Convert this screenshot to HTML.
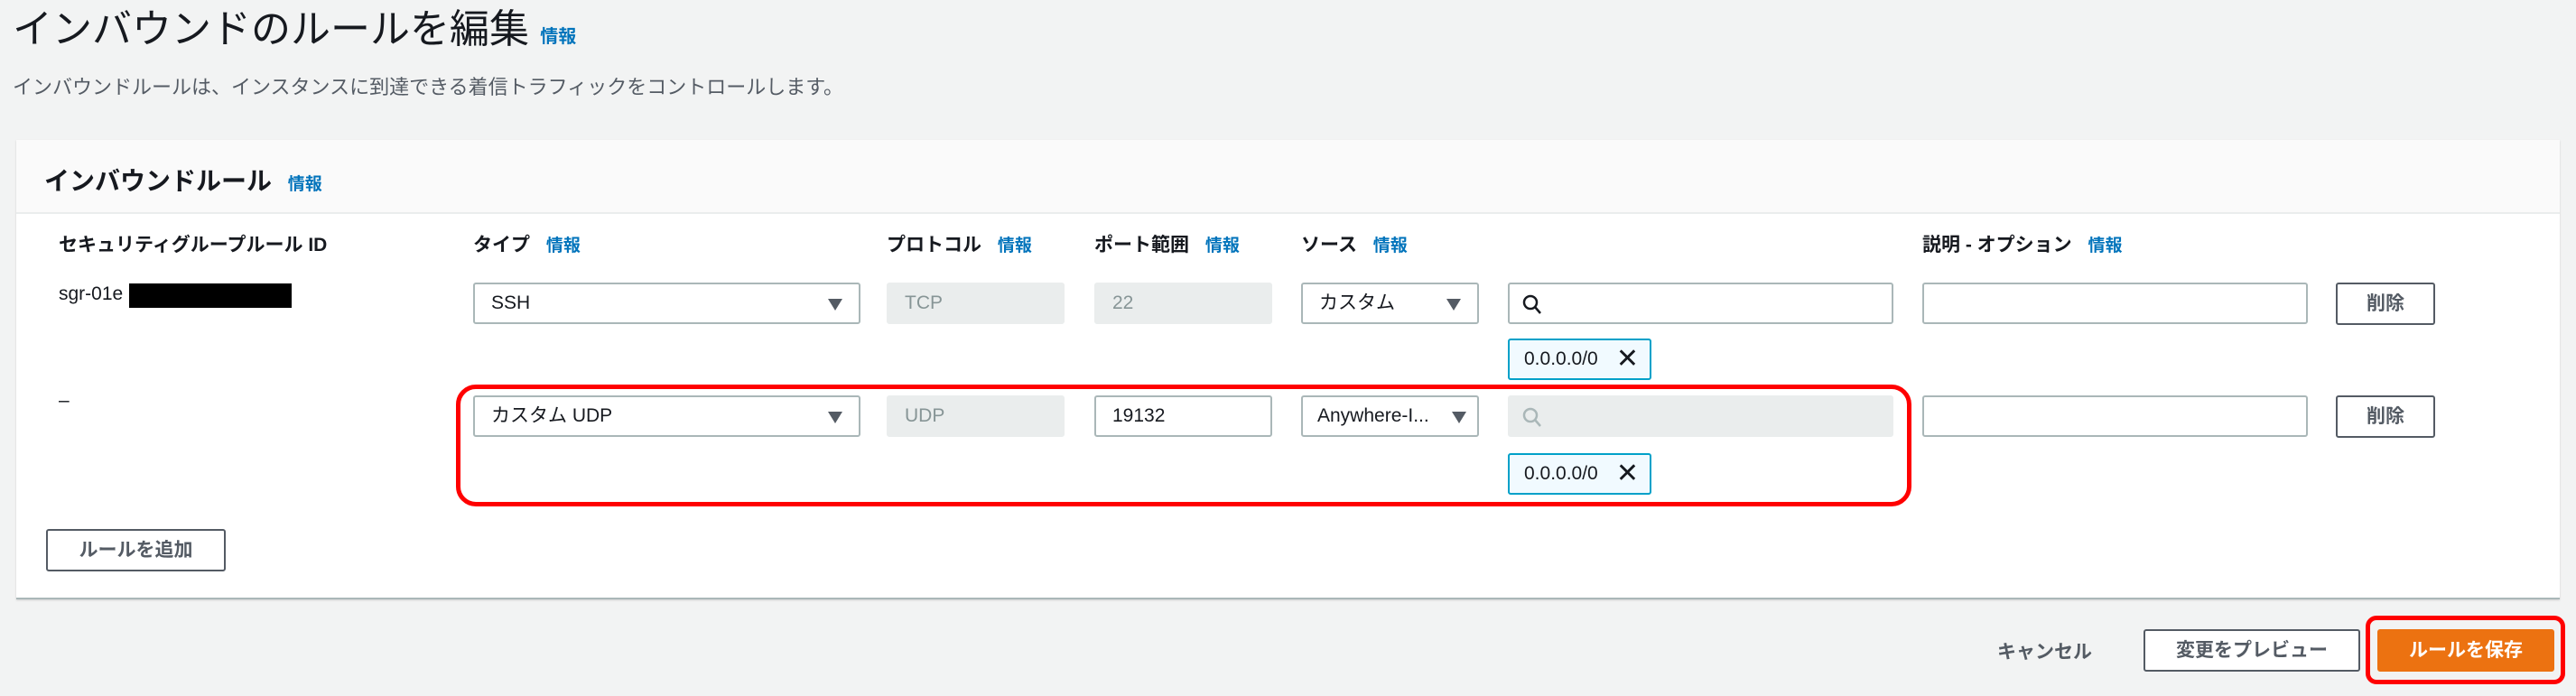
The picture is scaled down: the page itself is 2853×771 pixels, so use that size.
<!DOCTYPE html>
<html><head><meta charset="utf-8"><style>
*{margin:0;padding:0;box-sizing:border-box}
body{width:2853px;height:771px;background:#f2f3f3;position:relative;overflow:hidden;font-family:"Liberation Sans","Noto Sans CJK JP",sans-serif;color:#16191f}
.a{position:absolute;white-space:nowrap}
.l{color:#0073bb;font-weight:bold}
.box{position:absolute;height:46px;border:2px solid #aab7b8;border-radius:3px;background:#fff;font-size:21px;line-height:42px;padding-left:18px}
.dis{background:#eaeded;border-color:#eaeded;color:#879596}
.arr{position:absolute;right:18px;top:16px;width:0;height:0;border-left:8px solid transparent;border-right:8px solid transparent;border-top:13px solid #545b64}
.tok{position:absolute;height:46px;width:159px;border:2px solid #00a1c9;background:#f1faff;border-radius:3px;font-size:21px;line-height:42px;padding-left:16px}
.btn{position:absolute;height:47px;border:2px solid #545b64;border-radius:3px;background:#fff;font-size:21px;font-weight:bold;text-align:center;line-height:43px;color:#545b64}
.h{font-size:21px;font-weight:600}
</style></head><body>
<div class="a" style="left:14px;top:6px;font-size:44px;line-height:54px">インバウンドのルールを編集 <span class="l" style="font-size:20px">情報</span></div>
<div class="a" style="left:14px;top:79px;font-size:22px;color:#545b64">インバウンドルールは、インスタンスに到達できる着信トラフィックをコントロールします。</div>
<div style="position:absolute;left:18px;top:155px;width:2817px;height:509px;background:#fff;border-bottom:2px solid #aab7b8;box-shadow:0 1px 2px rgba(0,0,0,.15)">
<div style="height:82px;background:#fafafa;border-bottom:2px solid #eaeded"></div></div>
<div class="a" style="left:49px;top:179px;font-size:28px;font-weight:bold">インバウンドルール <span class="l" style="font-size:19px;margin-left:10px">情報</span></div>
<div class="a h" style="left:65px;top:255px">セキュリティグループルール ID</div>
<div class="a h" style="left:524px;top:255px">タイプ <span class="l" style="font-size:19px;margin-left:12px">情報</span></div>
<div class="a h" style="left:982px;top:255px">プロトコル <span class="l" style="font-size:19px;margin-left:12px">情報</span></div>
<div class="a h" style="left:1212px;top:255px">ポート範囲 <span class="l" style="font-size:19px;margin-left:12px">情報</span></div>
<div class="a h" style="left:1441px;top:255px">ソース <span class="l" style="font-size:19px;margin-left:12px">情報</span></div>
<div class="a h" style="left:2129px;top:255px">説明 - オプション <span class="l" style="font-size:19px;margin-left:12px">情報</span></div>

<div class="a" style="left:65px;top:314px;font-size:21px">sgr-01e</div>
<div class="a" style="left:143px;top:314px;width:180px;height:27px;background:#000"></div>
<div class="box" style="left:524px;top:313px;width:429px">SSH<div class="arr"></div></div>
<div class="box dis" style="left:982px;top:313px;width:197px">TCP</div>
<div class="box dis" style="left:1212px;top:313px;width:197px">22</div>
<div class="box" style="left:1441px;top:313px;width:197px">カスタム<div class="arr"></div></div>
<div class="box" style="left:1670px;top:313px;width:427px"><svg style="position:absolute;left:14px;top:11px" width="22" height="24" viewBox="0 0 22 24"><circle cx="9" cy="9" r="7" fill="none" stroke="#16191f" stroke-width="2.5"/><path d="M14 14l6 7" stroke="#16191f" stroke-width="2.5"/></svg></div>
<div class="box" style="left:2129px;top:313px;width:427px"></div>
<div class="btn" style="left:2587px;top:313px;width:110px">削除</div>
<div class="tok" style="left:1670px;top:375px">0.0.0.0/0<span style="position:absolute;right:12px;top:0;font-size:30px;color:#16191f">✕</span></div>

<div class="a" style="left:65px;top:432px;font-size:21px">–</div>
<div class="box" style="left:524px;top:438px;width:429px">カスタム UDP<div class="arr"></div></div>
<div class="box dis" style="left:982px;top:438px;width:197px">UDP</div>
<div class="box" style="left:1212px;top:438px;width:197px">19132</div>
<div class="box" style="left:1441px;top:438px;width:197px;padding-left:16px">Anywhere-I...<div class="arr" style="right:12px"></div></div>
<div class="box dis" style="left:1670px;top:438px;width:427px"><svg style="position:absolute;left:14px;top:11px" width="22" height="24" viewBox="0 0 22 24"><circle cx="9" cy="9" r="7" fill="none" stroke="#aab7b8" stroke-width="2.5"/><path d="M14 14l6 7" stroke="#aab7b8" stroke-width="2.5"/></svg></div>
<div class="box" style="left:2129px;top:438px;width:427px"></div>
<div class="btn" style="left:2587px;top:438px;width:110px">削除</div>
<div class="tok" style="left:1670px;top:502px">0.0.0.0/0<span style="position:absolute;right:12px;top:0;font-size:30px;color:#16191f">✕</span></div>
<div class="a" style="left:505px;top:426px;width:1612px;height:135px;border:5px solid #f00;border-radius:22px"></div>

<div class="btn" style="left:51px;top:586px;width:199px">ルールを追加</div>

<div class="a" style="left:2212px;top:706px;font-size:21px;font-weight:bold;color:#545b64">キャンセル</div>
<div class="btn" style="left:2374px;top:697px;width:240px">変更をプレビュー</div>
<div class="btn" style="left:2633px;top:697px;width:196px;background:#ec7211;border-color:#ec7211;color:#fff">ルールを保存</div>
<div class="a" style="left:2620px;top:682px;width:221px;height:76px;border:5px solid #f00;border-radius:12px"></div>
</body></html>
